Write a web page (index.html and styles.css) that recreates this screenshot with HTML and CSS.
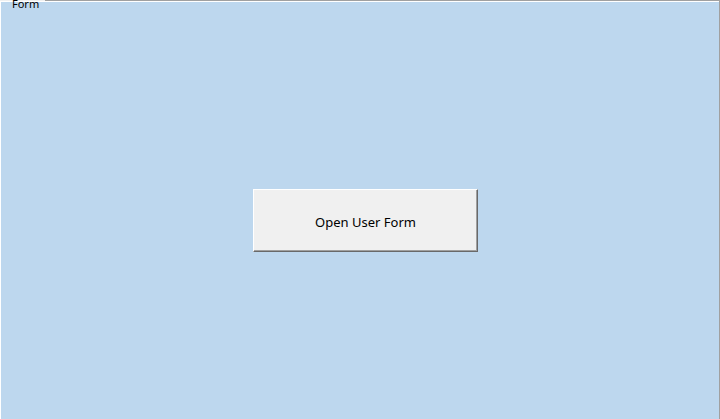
FILE: index.html
```html
<!DOCTYPE html>
<html>
<head>
<meta charset="utf-8">
<link rel="stylesheet" href="styles.css">
</head>
<body>
<div class="frame">
  <span class="legend">Form</span>
  <button class="open-btn" type="button">Open User Form</button>
</div>
</body>
</html>
```
FILE: styles.css
```css
html, body {
  margin: 0;
  padding: 0;
  width: 720px;
  height: 419px;
  overflow: hidden;
  background: #bdd7ee;
}
.frame {
  position: relative;
  box-sizing: border-box;
  width: 720px;
  height: 419px;
  background: #bdd7ee;
  border-top: 1px solid #a0a0a0;
  border-left: 1px solid #ffffff;
  border-right: 1px solid #a0a0a0;
  box-shadow: inset 0 1px #ffffff;
  padding: 188px 0 0 252px;
  font-family: "Noto Sans", "Open Sans", sans-serif;
}
.legend {
  position: absolute;
  left: -1px;
  top: -1px;
  width: 45px;
  height: 10px;
  background: linear-gradient(#f0f0f0 3px, transparent 3px);
  font-size: 11px;
  line-height: 11px;
  color: #000;
  padding-left: 12px;
  box-sizing: border-box;
  margin-top: -2px;
}
.open-btn {
  display: flex;
  align-items: center;
  justify-content: center;
  box-sizing: border-box;
  width: 225px;
  height: 63px;
  margin: 0;
  padding: 2px 0 0 0;
  background: #f0f0f0;
  border-top: 1px solid #ffffff;
  border-left: 1px solid #ffffff;
  border-right: 1px solid #696969;
  border-bottom: 1px solid #696969;
  box-shadow: inset -1px -1px #a0a0a0;
  font-family: "Noto Sans", "Open Sans", sans-serif;
  font-size: 13px;
  color: #000;
}
```
